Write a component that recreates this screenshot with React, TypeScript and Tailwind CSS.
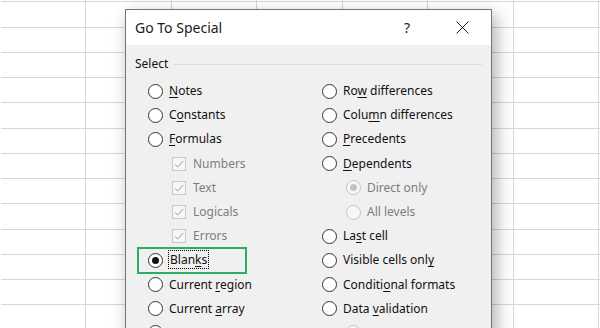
import React from 'react';

type Item = { label: string; u?: number; kind: 'radio' | 'check' | 'subradio'; checked?: boolean; disabled?: boolean; focus?: boolean };

const LEFT: Item[] = [
  { label: 'Notes', u: 0, kind: 'radio' },
  { label: 'Constants', u: 1, kind: 'radio' },
  { label: 'Formulas', u: 0, kind: 'radio' },
  { label: 'Numbers', kind: 'check', checked: true, disabled: true },
  { label: 'Text', kind: 'check', checked: true, disabled: true },
  { label: 'Logicals', kind: 'check', checked: true, disabled: true },
  { label: 'Errors', kind: 'check', checked: true, disabled: true },
  { label: 'Blanks', u: 4, kind: 'radio', checked: true, focus: true },
  { label: 'Current region', u: 8, kind: 'radio' },
  { label: 'Current array', u: 8, kind: 'radio' },
  { label: '', kind: 'radio' },
];

const RIGHT: Item[] = [
  { label: 'Row differences', u: 2, kind: 'radio' },
  { label: 'Column differences', u: 4, kind: 'radio' },
  { label: 'Precedents', u: 0, kind: 'radio' },
  { label: 'Dependents', u: 0, kind: 'radio' },
  { label: 'Direct only', kind: 'subradio', checked: true, disabled: true },
  { label: 'All levels', kind: 'subradio', disabled: true },
  { label: 'Last cell', u: 2, kind: 'radio' },
  { label: 'Visible cells only', u: 17, kind: 'radio' },
  { label: 'Conditional formats', u: 7, kind: 'radio' },
  { label: 'Data validation', u: 5, kind: 'radio' },
  { label: '', kind: 'subradio', disabled: true },
];

function Label({ item }: { item: Item }) {
  const t = item.label;
  const content =
    item.u === undefined ? t : (
      <>
        {t.slice(0, item.u)}
        <span className="underline underline-offset-2">{t.slice(item.u, item.u + 1)}</span>
        {t.slice(item.u + 1)}
      </>
    );
  if (item.focus) {
    return <span className="border border-dotted border-black -mx-px px-px leading-[16px] text-[#111]">{content}</span>;
  }
  return <span className={item.disabled ? 'text-[#7d7d7d]' : 'text-[#111]'}>{content}</span>;
}

function Radio({ checked, disabled }: { checked?: boolean; disabled?: boolean }) {
  return (
    <span
      className={`w-[15px] h-[15px] rounded-full border flex items-center justify-center shrink-0 ${
        disabled ? 'border-[#c4c4c4] bg-[#f7f7f7]' : 'border-[#333] bg-white'
      }`}
    >
      {checked && <span className={`w-[7px] h-[7px] rounded-full ${disabled ? 'bg-[#c2c2c2]' : 'bg-[#111]'}`} />}
    </span>
  );
}

function Check() {
  return (
    <span className="w-[14px] h-[14px] border border-[#c8c8c8] bg-[#f7f7f7] flex items-center justify-center shrink-0">
      <svg width="12" height="12" viewBox="0 0 12 12">
        <path d="M2 6.2 L4.8 9 L10.2 3" fill="none" stroke="#bdbdbd" strokeWidth="1.2" />
      </svg>
    </span>
  );
}

function Row({ item }: { item: Item }) {
  return (
    <div className={`relative h-[24.2px] flex items-center ${item.kind !== 'radio' ? 'pl-[24px]' : ''}`}>
      {item.kind === 'check' ? <Check /> : <Radio checked={item.checked} disabled={item.disabled} />}
      {item.label && (
        <span className={item.kind === 'check' ? 'ml-[7px]' : 'ml-[6px]'}>
          <Label item={item} />
        </span>
      )}
      {item.focus && (
        <span className="absolute left-[-11px] top-[-1px] w-[110px] h-[27px] border-2 border-[#2aae62]" />
      )}
    </div>
  );
}

export default function App() {
  return (
    <div className="relative w-[600px] h-[328px] overflow-hidden bg-white" style={{ fontFamily: '"Noto Sans", sans-serif' }}>
      {/* sheet grid */}
      <div className="mt-[-23px] ml-[0.5px] grid grid-cols-[repeat(8,85.5px)] grid-rows-[repeat(15,25.25px)]">
        {Array.from({ length: 120 }).map((_, i) => (
          <div key={i} className="border-r border-b border-[#d6d6d6]" />
        ))}
      </div>

      {/* dialog */}
      <div className="absolute left-[125px] top-[9px] w-[367px] h-[340px] border border-[#747474] bg-[#f0f0f0] shadow-[4px_6px_16px_rgba(0,0,0,0.32)] flex flex-col">
        <div className="h-[35px] bg-white flex items-center pl-[9px] pr-[22px]">
          <span className="text-[14px] text-[#1a1a1a] flex-1">Go To Special</span>
          <span className="text-[14px] text-[#222] mr-[46px]">?</span>
          <svg width="13" height="13" viewBox="0 0 13 13">
            <path d="M0.5 0.5 L12.5 12.5 M12.5 0.5 L0.5 12.5" stroke="#222" strokeWidth="1" />
          </svg>
        </div>
        <div className="pt-[7px] text-[12px]">
          <div className="h-[24px] flex items-center pl-[9px] pr-[9px]">
            <span className="text-[#111]">Select</span>
            <span className="flex-1 h-px bg-[#dcdcdc] ml-[6px]" />
          </div>
          <div className="mt-[3px] pl-[22px] flex">
            <div className="w-[174px] flex flex-col">
              {LEFT.map((it, i) => <Row key={i} item={it} />)}
            </div>
            <div className="flex flex-col">
              {RIGHT.map((it, i) => <Row key={i} item={it} />)}
            </div>
          </div>
        </div>
      </div>
    </div>
  );
}
